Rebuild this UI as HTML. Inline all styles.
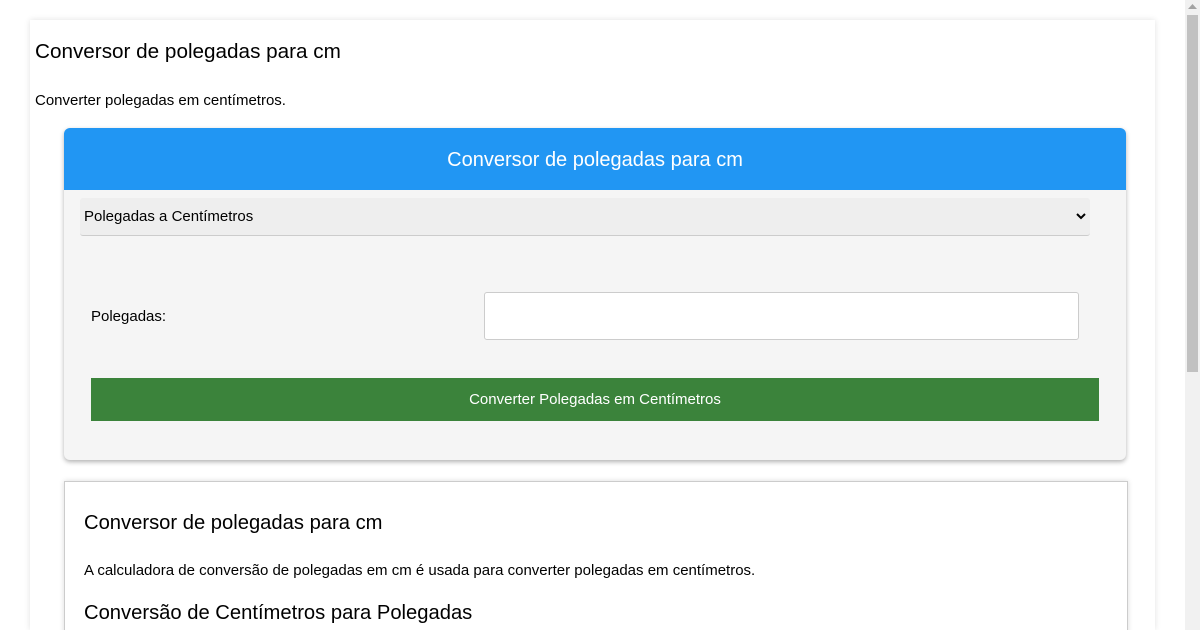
<!DOCTYPE html>
<html style="overflow:hidden;height:630px"><head><style>
body{margin:0;width:1200px;height:630px;overflow:hidden;background:#fff;font-family:"Liberation Sans",sans-serif;color:#000;position:relative}
.page{position:absolute;left:30px;top:20px;width:1125px;height:610px;background:#fff;box-shadow:0 0 6px rgba(0,0,0,.12);overflow:hidden}
h1{position:absolute;left:5px;top:20px;margin:0;font-size:20.7px;font-weight:normal}
.sub{position:absolute;left:5px;top:72px;font-size:15px}
.card{position:absolute;left:34px;top:108px;width:1062px;height:332px;background:#f5f5f5;border-radius:6px;box-shadow:0 2px 5px rgba(0,0,0,.3);overflow:hidden}
.hd{height:62px;background:#2196f3;color:#fff;font-size:20px;text-align:center;line-height:64px}
.sel{position:absolute;left:16px;top:70px;width:1010px;height:38px;background:#eee;border-radius:3px;border-bottom:1px solid #ccc;box-sizing:border-box;font-size:15px;line-height:38px;padding-left:4px}
.sel svg{position:absolute;right:4px;top:15px}
.lbl{position:absolute;left:27px;top:180px;font-size:15px}
.inp{position:absolute;left:420px;top:164px;width:595px;height:48px;background:#fff;border:1px solid #ccc;border-radius:3px;box-sizing:border-box}
.btn{position:absolute;left:27px;top:250px;width:1008px;height:43px;background:#3b833b;color:#fff;font-size:15px;text-align:center;line-height:43px}
.box{position:absolute;left:34px;top:461px;width:1062px;height:160px;border:1px solid #ccc;box-shadow:0 0 5px rgba(0,0,0,.15);background:#fff}
.box h2{position:absolute;left:19px;top:30px;margin:0;font-size:20.2px;font-weight:normal}
.box p{position:absolute;left:19px;top:80px;margin:0;font-size:15px}
.box h3{position:absolute;left:19px;top:120px;margin:0;font-size:20.2px;font-weight:normal}
.sb{position:absolute;left:1185px;top:0;width:15px;height:630px;background:#f1f1f1}
.th{position:absolute;left:2px;top:15px;width:11px;height:357px;background:#c1c1c1}
</style></head><body>
<div class="page">
<h1>Conversor de polegadas para cm</h1>
<div class="sub">Converter polegadas em centímetros.</div>
<div class="card">
<div class="hd">Conversor de polegadas para cm</div>
<div class="sel">Polegadas a Centímetros<svg width="10" height="7" viewBox="0 0 10 7"><path d="M1 1l4 4 4-4" stroke="#000" stroke-width="2" fill="none"/></svg></div>
<div class="lbl">Polegadas:</div>
<div class="inp"></div>
<div class="btn">Converter Polegadas em Centímetros</div>
</div>
<div class="box">
<h2>Conversor de polegadas para cm</h2>
<p>A calculadora de conversão de polegadas em cm é usada para converter polegadas em centímetros.</p>
<h3>Conversão de Centímetros para Polegadas</h3>
</div>
</div>
<div class="sb"><svg style="position:absolute;left:3px;top:4px" width="9" height="6"><path d="M0 5L4.5 0 9 5z" fill="#a3a3a3"/></svg><div class="th"></div></div>
</body></html>
